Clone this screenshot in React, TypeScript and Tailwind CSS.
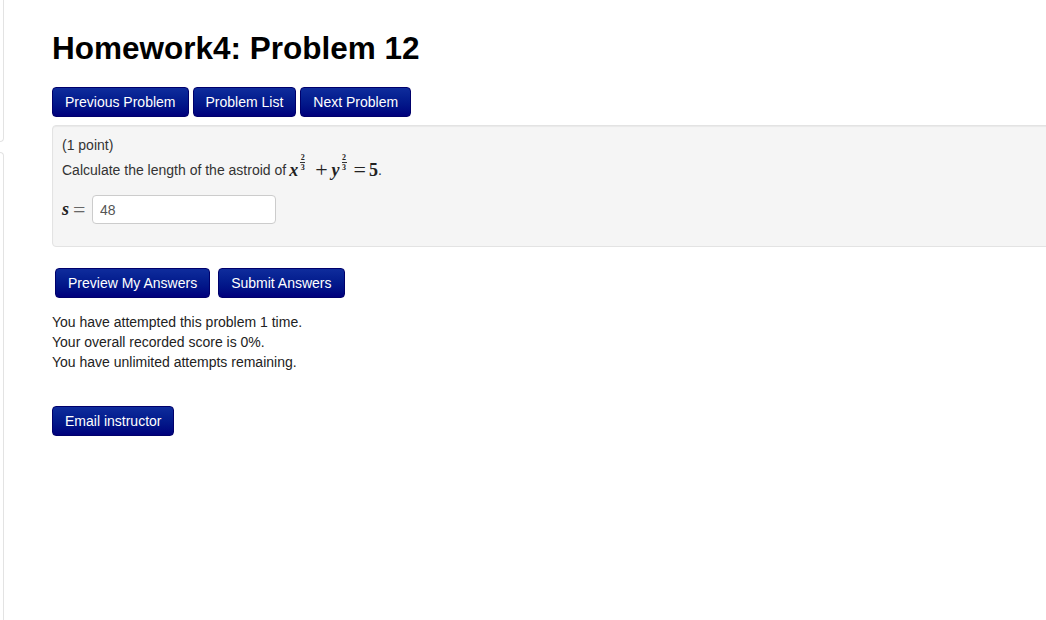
import React from 'react';

const btn =
  'inline-block rounded-[4px] border border-[#00006b] bg-gradient-to-b from-[#0f2c9c] to-[#00007c] px-[12px] py-[4px] text-[14px] leading-[20px] text-white';

const Frac: React.FC = () => (
  <span className="ml-[2px] inline-flex -translate-y-[8px] flex-col items-center font-bold text-[8px] leading-[7px]">
    <span>2</span>
    <span className="my-[1px] h-px w-[5px] bg-[#333]" />
    <span>3</span>
  </span>
);

export default function App() {
  return (
    <div
      className="flex min-h-[620px] w-full overflow-hidden bg-white text-[#333]"
      style={{ fontFamily: '"Liberation Sans", Arial, sans-serif' }}
    >
      {/* edges of the side panels, mostly off screen */}
      <div className="flex w-[4px] shrink-0 flex-col">
        <div className="h-[142px] rounded-br-[4px] border-r border-b border-[#e3e3e3]" />
        <div className="mt-[10px] flex-1 rounded-tr-[4px] border-r border-t border-[#e3e3e3]" />
      </div>

      <div className="flex-1 pl-[48px]">
        <h2 className="mt-[30px] text-[31.5px] font-bold leading-[36px] text-black">
          Homework4: Problem 12
        </h2>

        <div className="mt-[21px] flex gap-[4px]">
          <button className={btn}>Previous Problem</button>
          <button className={btn}>Problem List</button>
          <button className={btn}>Next Problem</button>
        </div>

        <div className="mt-[8px] -mr-[20px] rounded-[4px] border border-[#e3e3e3] bg-[#f5f5f5] px-[9px] pt-[9px] pb-[22px] text-[14px] shadow-[inset_0_1px_1px_rgba(0,0,0,0.05)]">
          <div className="leading-[20px]">(1 point)</div>
          <div className="mt-[3px] flex h-[24px] items-center">
            <span>Calculate the length of the astroid of</span>
            <span
              className="ml-[3px] flex items-center text-[18px] text-[#222]"
              style={{ fontFamily: '"Liberation Serif", "Times New Roman", serif' }}
            >
              <span className="italic font-bold">x</span>
              <Frac />
              <span className="ml-[10px] mr-[4px] text-[22px] leading-[24px] font-light">+</span>
              <span className="italic font-bold">y</span>
              <Frac />
              <span className="ml-[7px] mr-[3px] text-[22px] leading-[24px] font-light">=</span>
              <span className="font-bold">5</span>
            </span>
            <span>.</span>
          </div>
          <div className="mt-[13px] flex h-[29px] items-center">
            <span
              className="flex w-[30px] items-center text-[18px] text-[#222]"
              style={{ fontFamily: '"Liberation Serif", "Times New Roman", serif' }}
            >
              <span className="italic font-bold">s</span>
              <span className="ml-[4px] text-[22px] leading-[24px] text-[#666]">=</span>
            </span>
            <input
              readOnly
              value="48"
              className="h-[29px] w-[184px] rounded-[4px] border border-[#ccc] bg-white px-[7px] text-[14px] text-[#555] outline-none"
            />
          </div>
        </div>

        <div className="mt-[21px] ml-[3px] flex gap-[8px]">
          <button className={btn}>Preview My Answers</button>
          <button className={btn}>Submit Answers</button>
        </div>

        <div className="mt-[14px] text-[14px] leading-[20px] text-[#222]">
          <div>You have attempted this problem 1 time.</div>
          <div>Your overall recorded score is 0%.</div>
          <div>You have unlimited attempts remaining.</div>
        </div>

        <div className="mt-[34px]">
          <button className={btn}>Email instructor</button>
        </div>
      </div>
    </div>
  );
}
